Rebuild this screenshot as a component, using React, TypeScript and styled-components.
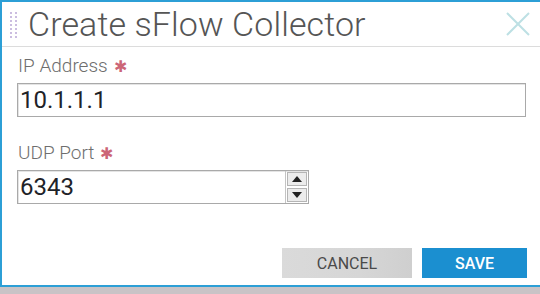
import React from "react";
import styled, { createGlobalStyle } from "styled-components";

const GlobalStyle = createGlobalStyle`
  html, body {
    margin: 0;
    padding: 0;
    background: #c9c3c6;
    overflow: hidden;
  }
  body {
    font-family: Roboto, "Liberation Sans", Arial, sans-serif;
  }
`;

const Modal = styled.div`
  width: 560px;
  height: 283px;
  background: #ffffff;
  border: 2px solid #2c9fd6;
  border-right: none;
  display: flex;
  flex-direction: column;
`;

const Header = styled.div`
  box-sizing: border-box;
  width: 538px;
  height: 45px;
  display: flex;
  align-items: center;
  border-bottom: 1px solid #dcdcdc;
  padding-left: 8px;
  padding-right: 10px;
`;

const DragHandle = styled.div`
  width: 8px;
  height: 26px;
  display: grid;
  grid-template-columns: 2px 2px;
  column-gap: 3px;
  row-gap: 2px;
  grid-auto-rows: 2px;
  align-content: start;
  margin-right: 10px;
  margin-top: 2px;
`;

const Dot = styled.span`
  width: 2px;
  height: 2px;
  background: #cbbde0;
`;

const Title = styled.h1`
  flex: 1;
  margin: 0;
  font-size: 34px;
  font-weight: 300;
  color: #555555;
  line-height: 40px;
  white-space: nowrap;
  letter-spacing: 0.1px;
`;

const CloseButton = styled.button`
  border: none;
  background: none;
  padding: 0;
  width: 24px;
  height: 24px;
  cursor: pointer;
  display: flex;
`;

const Body = styled.div`
  flex: 1;
  padding: 8px 13px 0 15px;
  display: flex;
  flex-direction: column;
`;

const Field = styled.div`
  display: flex;
  flex-direction: column;
  margin-bottom: 25px;
`;

const Label = styled.label`
  font-size: 19px;
  font-weight: 300;
  color: #6e6e6e;
  line-height: 22px;
  margin-bottom: 5px;
  padding-left: 1px;
`;

const Required = styled.span`
  color: #cc6677;
  margin-left: 6px;
  font-size: 16px;
`;

const InputBox = styled.div<{ $width: number }>`
  width: ${(p) => p.$width}px;
  height: 34px;
  box-sizing: border-box;
  border: 1px solid #a9a9a9;
  box-shadow: inset 1px 1px 0 #e4e4e4;
  display: flex;
  align-items: stretch;
`;

const Value = styled.div`
  flex: 1;
  font-size: 24px;
  color: #1e2328;
  line-height: 32px;
  padding-left: 2px;
`;

const Spinner = styled.div`
  width: 22px;
  display: flex;
  flex-direction: column;
  border-left: 1px solid #c4c4c4;
`;

const SpinButton = styled.div`
  flex: 1;
  display: flex;
  align-items: center;
  justify-content: center;
  background: #ececec;
  border: 1px solid #b5b5b5;
  margin: 1px;
`;

const Footer = styled.div`
  display: flex;
  justify-content: flex-end;
  gap: 10px;
  padding: 0 13px 7px 0;
  margin-top: auto;
  width: 525px;
`;

const Button = styled.button<{ $primary?: boolean }>`
  height: 30px;
  width: ${(p) => (p.$primary ? 105 : 130)}px;
  border: none;
  font-family: Roboto, "Liberation Sans", Arial, sans-serif;
  font-size: 16px;
  font-weight: ${(p) => (p.$primary ? 500 : 400)};
  text-transform: uppercase;
  color: ${(p) => (p.$primary ? "#ffffff" : "#4a4a4a")};
  background: ${(p) =>
    p.$primary
      ? "#1b8fd0"
      : "linear-gradient(90deg, #dadada 0%, #d6d6d6 60%, #cfcfcf 100%)"};
  padding: 0;
`;

export default function App() {
  return (
    <>
      <GlobalStyle />
      <Modal>
        <Header>
          <DragHandle>
            {Array.from({ length: 14 }).map((_, i) => (
              <Dot key={i} />
            ))}
          </DragHandle>
          <Title>Create sFlow Collector</Title>
          <CloseButton aria-label="close">
            <svg width="24" height="24" viewBox="0 0 24 24">
              <path d="M1 1 L23 23 M23 1 L1 23" stroke="#bde0e4" strokeWidth="2" />
            </svg>
          </CloseButton>
        </Header>
        <Body>
          <Field>
            <Label>
              IP Address<Required>✱</Required>
            </Label>
            <InputBox $width={509}>
              <Value>10.1.1.1</Value>
            </InputBox>
          </Field>
          <Field>
            <Label>
              UDP Port<Required>✱</Required>
            </Label>
            <InputBox $width={292}>
              <Value>6343</Value>
              <Spinner>
                <SpinButton>
                  <svg width="10" height="6" viewBox="0 0 10 6">
                    <path d="M0 6 L5 0 L10 6 Z" fill="#222" />
                  </svg>
                </SpinButton>
                <SpinButton>
                  <svg width="10" height="6" viewBox="0 0 10 6">
                    <path d="M0 0 L10 0 L5 6 Z" fill="#222" />
                  </svg>
                </SpinButton>
              </Spinner>
            </InputBox>
          </Field>
        </Body>
        <Footer>
          <Button>Cancel</Button>
          <Button $primary>Save</Button>
        </Footer>
      </Modal>
    </>
  );
}
